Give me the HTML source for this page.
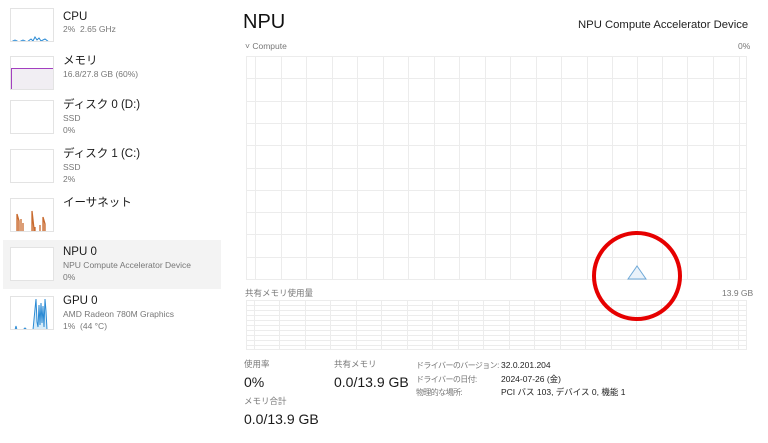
<!DOCTYPE html>
<html><head><meta charset="utf-8"><style>
*{margin:0;padding:0;box-sizing:border-box}
body{width:768px;height:443px;background:#fff;font-family:"Liberation Sans","Noto Sans CJK JP",sans-serif;color:#1a1a1a;position:relative;overflow:hidden}
.a{position:absolute;white-space:nowrap;line-height:1.15}
.t{font-size:11.5px;color:#1a1a1a}
.s{font-size:8.5px;color:#777}
.box{position:absolute;left:10px;width:44px;height:34px;border:1px solid #e3e3e3;background:#fff;overflow:hidden}
.g{font-size:8.5px;color:#777}
</style></head><body>
<div class="a" style="left:3px;top:240px;width:218px;height:49px;background:#f3f3f3"></div>

<div class="box" style="top:8px"><svg width="44" height="34"><polyline points="0,33 4,31 8,33 12,31 16,33 20,30 22,32 24,28 26,31 28,29 30,32 34,30 38,33 44,33" fill="none" stroke="#2a8ad4" stroke-width="1"/></svg></div>
<div class="a t" style="left:63px;top:11px">CPU</div>
<div class="a s" style="left:63px;top:25px">2%&nbsp; 2.65 GHz</div>

<div class="box" style="top:56px"><div style="position:absolute;left:0;top:11px;width:44px;height:23px;background:#f1eef3;border-top:1px solid #a33fc0;border-left:1px solid #a33fc0"></div></div>
<div class="a t" style="left:63px;top:55px">メモリ</div>
<div class="a s" style="left:63px;top:70px">16.8/27.8 GB (60%)</div>

<div class="box" style="top:100px"></div>
<div class="a t" style="left:63px;top:99px">ディスク 0 (D:)</div>
<div class="a s" style="left:63px;top:114px">SSD</div>
<div class="a s" style="left:63px;top:126px">0%</div>

<div class="box" style="top:149px"><svg width="44" height="34"><path d="M7,32v1M22,32v1M29,32v1" stroke="#4caf50" stroke-width="1.5"/></svg></div>
<div class="a t" style="left:63px;top:148px">ディスク 1 (C:)</div>
<div class="a s" style="left:63px;top:163px">SSD</div>
<div class="a s" style="left:63px;top:175px">2%</div>

<div class="box" style="top:198px"><svg width="44" height="34"><path d="M6,34V15L8,22V34M10,34V20V34M12,34V24V34M21,34V12L23,30V34M24,34V28M29,34V26M32,34V18L34,25V34" fill="#f0c8b0" stroke="#c86a2e" stroke-width="1.3"/></svg></div>
<div class="a t" style="left:63px;top:197px">イーサネット</div>

<div class="box" style="top:247px"><svg width="44" height="34"><path d="M33,32v2" stroke="#2a8ad4" stroke-width="1.5"/></svg></div>
<div class="a t" style="left:63px;top:246px">NPU 0</div>
<div class="a s" style="left:63px;top:261px">NPU Compute Accelerator Device</div>
<div class="a s" style="left:63px;top:273px">0%</div>

<div class="box" style="top:296px"><svg width="44" height="34"><polyline points="0,33 4,33 5,29 6,33 12,33 14,31 16,33 22,33 24,12 25,2 26,25 27,30 28,8 29,28 30,6 31,26 32,9 33,30 34,2 35,14 36,33 44,33" fill="#d6ebf8" stroke="#2a8ad4" stroke-width="1"/></svg></div>
<div class="a t" style="left:63px;top:295px">GPU 0</div>
<div class="a s" style="left:63px;top:310px">AMD Radeon 780M Graphics</div>
<div class="a s" style="left:63px;top:322px">1%&nbsp; (44 °C)</div>

<div class="a" style="left:243px;top:11px;font-size:20px;color:#111">NPU</div>
<div class="a" style="left:578px;top:19px;font-size:11.3px;color:#222">NPU Compute Accelerator Device</div>
<div class="a g" style="left:245px;top:42px">˅ Compute</div>
<div class="a g" style="left:738px;top:42px">0%</div>

<svg class="a" style="left:0;top:0" width="768" height="443">
<g stroke="#ececec" stroke-width="1" fill="none">
<rect x="246.5" y="56.5" width="500" height="223"/>
<path d="M255.5,56V279M281.5,56V279M306.5,56V279M332.5,56V279M357.5,56V279M383.5,56V279M408.5,56V279M434.5,56V279M459.5,56V279M485.5,56V279M510.5,56V279M536.5,56V279M561.5,56V279M587.5,56V279M612.5,56V279M637.5,56V279M662.5,56V279M687.5,56V279M713.5,56V279M739.5,56V279"/>
<path d="M246,78.5H746M246,101.5H746M246,123.5H746M246,145.5H746M246,168.5H746M246,190.5H746M246,212.5H746M246,234.5H746M246,257.5H746"/>
<rect x="246.5" y="300.5" width="500" height="49"/>
<path d="M254.5,300V350M279.5,300V350M305.5,300V350M330.5,300V350M356.5,300V350M381.5,300V350M407.5,300V350M432.5,300V350M458.5,300V350M483.5,300V350M509.5,300V350M534.5,300V350M560.5,300V350M585.5,300V350M611.5,300V350M636.5,300V350M661.5,300V350M686.5,300V350M712.5,300V350M738.5,300V350"/>
<path d="M246,305.5H746M246,310.5H746M246,315.5H746M246,320.5H746M246,325.5H746M246,330.5H746M246,335.5H746M246,340.5H746M246,345.5H746"/>
</g>
<path d="M628,279L637,266L646,279Z" fill="#eaf2fa" stroke="#6fa9d8" stroke-width="1"/>
<circle cx="637" cy="276" r="43" fill="none" stroke="#e60000" stroke-width="4"/>
</svg>

<div class="a g" style="left:245px;top:289px">共有メモリ使用量</div>
<div class="a g" style="left:722px;top:289px">13.9 GB</div>

<div class="a g" style="left:244px;top:360px">使用率</div>
<div class="a" style="left:244px;top:374px;font-size:14px">0%</div>
<div class="a g" style="left:334px;top:360px">共有メモリ</div>
<div class="a" style="left:334px;top:374px;font-size:14px">0.0/13.9 GB</div>
<div class="a g" style="left:244px;top:397px">メモリ合計</div>
<div class="a" style="left:244px;top:411px;font-size:14px">0.0/13.9 GB</div>

<div class="a g" style="left:416px;top:359px;line-height:13.5px;font-size:8px;letter-spacing:-0.6px">ドライバーのバージョン:<br>ドライバーの日付:<br>物理的な場所:</div>
<div class="a" style="left:501px;top:359px;font-size:8.5px;color:#222;line-height:13.5px">32.0.201.204<br>2024-07-26 (金)<br>PCI バス 103, デバイス 0, 機能 1</div>
</body></html>
